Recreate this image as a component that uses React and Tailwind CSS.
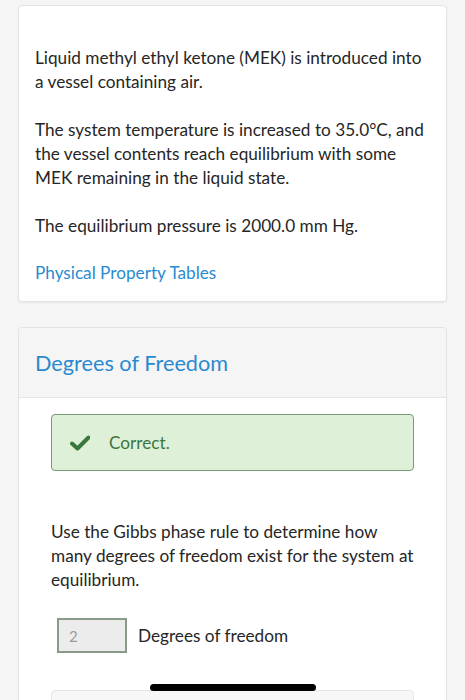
import React from 'react';

const CheckIcon = () => (
  <svg width="20" height="16" viewBox="0 0 20 16" className="shrink-0">
    <path d="M2 8.5 L7.5 13.5 L18.5 2.5" fill="none" stroke="#3c763d" strokeWidth="4" strokeLinecap="round" strokeLinejoin="round" />
  </svg>
);

const App = () => {
  return (
    <div className="min-h-[700px] bg-[#f5f5f5] pt-[5px] px-[18px] text-[17.2px] leading-[24px] text-[#262626]" style={{ fontFamily: 'Lato, "Open Sans", sans-serif' }}>
      <div className="bg-white border border-[#e3e3e3] rounded-[4px] shadow-[0_1px_2px_rgba(0,0,0,0.06)] pt-[40px] pb-[16px] px-[16px]">
        <p className="mb-[24px]">Liquid methyl ethyl ketone (MEK) is introduced into a vessel containing air.</p>
        <p className="mb-[24px]">The system temperature is increased to 35.0°C, and the vessel contents reach equilibrium with some MEK remaining in the liquid state.</p>
        <p className="mb-[23px]">The equilibrium pressure is 2000.0 mm Hg.</p>
        <a className="text-[#2a8ad0]">Physical Property Tables</a>
      </div>

      <div className="mt-[25px] bg-white border border-[#e3e3e3] rounded-[4px] overflow-hidden">
        <div className="bg-[#f5f5f5] border-b border-[#e6e6e6] h-[70px] px-[16px] flex items-center">
          <h2 className="text-[21.7px] text-[#2a8ad0]">Degrees of Freedom</h2>
        </div>
        <div className="px-[32px] pt-[16px] pb-[40px]">
          <div className="h-[57px] bg-[#dff0d8] border border-[#7a9a78] rounded-[4px] flex items-center pl-[18px]">
            <CheckIcon />
            <span className="ml-[19px] text-[#3c763d] mt-[1px]">Correct.</span>
          </div>
          <p className="mt-[49px] -mr-[5px]">Use the Gibbs phase rule to determine how many degrees of freedom exist for the system at equilibrium.</p>
          <div className="mt-[26px] flex items-center pl-[6px]">
            <div className="w-[70px] h-[35px] bg-[#ececec] border-2 border-[#8a9a88] flex items-center pl-[10px] text-[#9a9a9a] text-[15px]">2</div>
            <span className="ml-[11px]">Degrees of freedom</span>
          </div>
          <div className="mt-[37px] h-[40px] bg-[#f7f7f7] border border-[#e6e6e6] rounded-[4px]"></div>
        </div>
      </div>

      <div className="fixed left-[150px] top-[684px] w-[166px] h-[7px] rounded-full bg-black"></div>
    </div>
  );
};

export default App;
